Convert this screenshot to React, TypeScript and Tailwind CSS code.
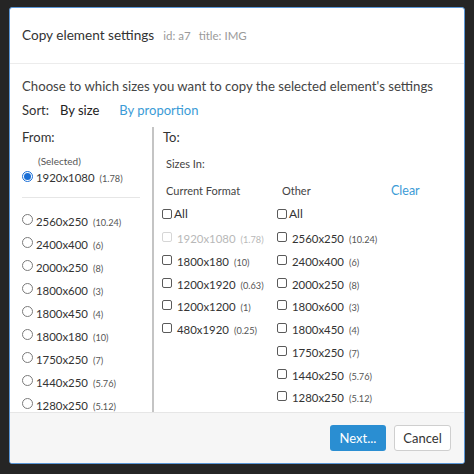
import React from 'react'

const fromSizes: [string, string][] = [
  ['2560x250', '10.24'],
  ['2400x400', '6'],
  ['2000x250', '8'],
  ['1800x600', '3'],
  ['1800x450', '4'],
  ['1800x180', '10'],
  ['1750x250', '7'],
  ['1440x250', '5.76'],
  ['1280x250', '5.12'],
]

const currentSizes: [string, string][] = [
  ['1800x180', '10'],
  ['1200x1920', '0.63'],
  ['1200x1200', '1'],
  ['480x1920', '0.25'],
]

// the other formats: everything except the ones in the current format
const otherSizes = fromSizes.filter(([label]) => label !== '1800x180')

function Radio({ checked = false }: { checked?: boolean }) {
  if (checked) {
    return (
      <span className="flex h-[11px] w-[11px] shrink-0 items-center justify-center rounded-full border border-[#1a6fd6] bg-white">
        <span className="h-[7px] w-[7px] rounded-full bg-[#1a6fd6]" />
      </span>
    )
  }
  return <span className="h-[11px] w-[11px] shrink-0 rounded-full border border-[#7a7a7a] bg-white" />
}

function Box({ disabled = false }: { disabled?: boolean }) {
  return (
    <span
      className={`h-[10px] w-[10px] shrink-0 rounded-[2px] border bg-white ${disabled ? 'border-[#d6d6d6]' : 'border-[#5a5a5a]'}`}
    />
  )
}

function Size({ label, ratio, disabled = false }: { label: string; ratio: string; disabled?: boolean }) {
  return (
    <span className={`whitespace-nowrap ${disabled ? 'text-[#b8b8b8]' : 'text-[#333]'}`}>
      <span className="text-[11.4px]">{label}</span>
      <span className={`ml-[5px] text-[9.2px] ${disabled ? 'text-[#b8b8b8]' : 'text-[#555]'}`}>({ratio})</span>
    </span>
  )
}

function CheckRow({ label, ratio, disabled = false }: { label: string; ratio?: string; disabled?: boolean }) {
  return (
    <div className="flex h-[22.75px] items-center">
      <Box disabled={disabled} />
      {ratio ? (
        <span className="ml-[5px]">
          <Size label={label} ratio={ratio} disabled={disabled} />
        </span>
      ) : (
        <span className="ml-[2px] text-[12px] text-[#333]">{label}</span>
      )}
    </div>
  )
}

export default function App() {
  return (
    <div
      className="h-[474px] w-[474px] bg-[#252525] pl-[9px] pt-[7px]"
      style={{ fontFamily: 'Lato, "Open Sans", sans-serif' }}
    >
      <div className="flex h-[457px] w-[456px] flex-col overflow-hidden rounded-[3px] border border-[#5a96d6] bg-white">
        {/* header */}
        <div className="flex h-[56px] shrink-0 items-center border-b border-[#ececec] px-[12px]">
          <span className="text-[13.6px] text-[#333]">Copy element settings</span>
          <span className="ml-[9px] text-[11.5px] text-[#9a9a9a]">id: a7</span>
          <span className="ml-[8px] text-[11.5px] text-[#9a9a9a]">title: IMG</span>
        </div>

        {/* body */}
        <div className="shrink-0 px-[12px] pt-[12px]">
          <div className="h-[20px] whitespace-nowrap text-[13.2px] leading-[20px] text-[#444]">
            Choose to which sizes you want to copy the selected element's settings
          </div>
          <div className="mt-[4px] flex h-[22px] items-center text-[13px]">
            <span className="text-[#333]">Sort:</span>
            <span className="ml-[11px] text-[#222]">By size</span>
            <span className="ml-[20px] text-[#3b9bd6]">By proportion</span>
          </div>

          <div className="mt-[5px] flex h-[285px] overflow-hidden">
            {/* from */}
            <div className="w-[132px] shrink-0 border-r-2 border-[#c4c4c4]">
              <div className="h-[20px] text-[13px] leading-[20px] text-[#333]">From:</div>
              <div className="ml-[16px] mt-[8px] h-[12px] text-[10px] leading-[12px] text-[#555]">(Selected)</div>
              <div className="flex h-[18px] items-center gap-[3px]">
                <Radio checked />
                <Size label="1920x1080" ratio="1.78" />
              </div>
              <div className="mr-[12px] mt-[12px] border-t border-[#e6e6e6]" />
              <div className="mt-[10px]">
                {fromSizes.map(([label, ratio]) => (
                  <div key={label} className="flex h-[23px] items-center gap-[3px]">
                    <Radio />
                    <Size label={label} ratio={ratio} />
                  </div>
                ))}
              </div>
            </div>

            {/* to */}
            <div className="flex-1 pl-[8px]">
              <div className="ml-[1px] h-[20px] text-[13px] leading-[20px] text-[#333]">To:</div>
              <div className="ml-[4px] mt-[10px] h-[14px] text-[11px] leading-[14px] text-[#444]">Sizes In:</div>
              <div className="mt-[11px] flex h-[18px] items-center text-[11px] text-[#444]">
                <span className="ml-[4px] w-[116px]">Current Format</span>
                <span className="w-[109px]">Other</span>
                <span className="text-[12.5px] text-[#3b9bd6]">Clear</span>
              </div>
              <div className="mt-[3px] flex">
                <div className="w-[115px] shrink-0">
                  <CheckRow label="All" />
                  <CheckRow label="1920x1080" ratio="1.78" disabled />
                  {currentSizes.map(([label, ratio]) => (
                    <CheckRow key={label} label={label} ratio={ratio} />
                  ))}
                </div>
                <div>
                  <CheckRow label="All" />
                  {otherSizes.map(([label, ratio]) => (
                    <CheckRow key={label} label={label} ratio={ratio} />
                  ))}
                </div>
              </div>
            </div>
          </div>
        </div>

        {/* footer */}
        <div className="flex flex-1 items-center justify-end gap-[8px] border-t border-[#e6e6e6] bg-[#f6f6f6] pr-[13px]">
          <button className="h-[26px] w-[56px] rounded-[3px] bg-[#2a8ed2] text-[13px] leading-[26px] text-white">
            Next...
          </button>
          <button className="h-[26px] w-[57px] rounded-[3px] border border-[#cfcfcf] bg-white text-[13px] leading-[24px] text-[#333]">
            Cancel
          </button>
        </div>
      </div>
    </div>
  )
}
